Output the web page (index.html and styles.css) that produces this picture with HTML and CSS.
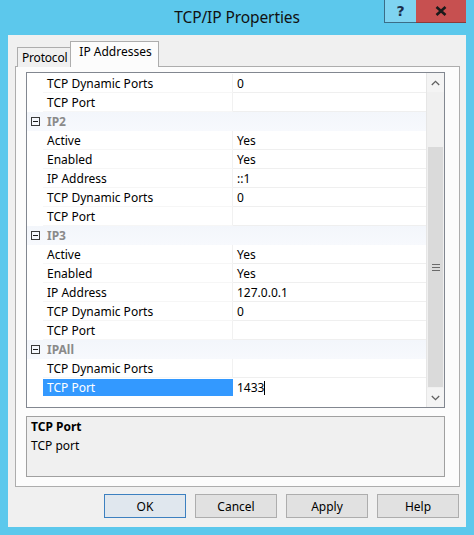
FILE: index.html
```html
<!DOCTYPE html>
<html>
<head>
<meta charset="utf-8">
<link rel="stylesheet" href="styles.css">
</head>
<body>
<div class="window">
  <div class="titlebar">
    <div class="spacer"></div>
    <div class="title">TCP/IP Properties</div>
    <div class="caption-buttons">
      <div class="cap-btn help-btn">?</div>
      <div class="cap-btn close-btn">
        <svg width="12" height="10" viewBox="0 0 12 10"><path d="M1.5 1 L10.5 9 M10.5 1 L1.5 9" stroke="#1a1a1a" stroke-width="2.6" stroke-linecap="butt"/></svg>
      </div>
    </div>
  </div>
  <div class="client">
    <div class="tabs">
      <div class="tab">Protocol</div>
      <div class="tab tab-active">IP Addresses</div>
    </div>
    <div class="panel">
      <div class="grid">
        <div class="rows">
          <div class="row"><div class="gutter"></div><div class="name">TCP Dynamic Ports</div><div class="value">0</div></div>
          <div class="row"><div class="gutter"></div><div class="name">TCP Port</div><div class="value"></div></div>
          <div class="row cat"><div class="gutter"><span class="toggle"></span></div><div class="cat-name">IP2</div></div>
          <div class="row"><div class="gutter"></div><div class="name">Active</div><div class="value">Yes</div></div>
          <div class="row"><div class="gutter"></div><div class="name">Enabled</div><div class="value">Yes</div></div>
          <div class="row"><div class="gutter"></div><div class="name">IP Address</div><div class="value">::1</div></div>
          <div class="row"><div class="gutter"></div><div class="name">TCP Dynamic Ports</div><div class="value">0</div></div>
          <div class="row"><div class="gutter"></div><div class="name">TCP Port</div><div class="value"></div></div>
          <div class="row cat"><div class="gutter"><span class="toggle"></span></div><div class="cat-name">IP3</div></div>
          <div class="row"><div class="gutter"></div><div class="name">Active</div><div class="value">Yes</div></div>
          <div class="row"><div class="gutter"></div><div class="name">Enabled</div><div class="value">Yes</div></div>
          <div class="row"><div class="gutter"></div><div class="name">IP Address</div><div class="value">127.0.0.1</div></div>
          <div class="row"><div class="gutter"></div><div class="name">TCP Dynamic Ports</div><div class="value">0</div></div>
          <div class="row"><div class="gutter"></div><div class="name">TCP Port</div><div class="value"></div></div>
          <div class="row cat"><div class="gutter"><span class="toggle"></span></div><div class="cat-name">IPAll</div></div>
          <div class="row"><div class="gutter"></div><div class="name">TCP Dynamic Ports</div><div class="value"></div></div>
          <div class="row row-selected"><div class="gutter"></div><div class="name">TCP Port</div><div class="value">1433<span class="caret"></span></div></div>
        </div>
        <div class="scrollbar">
          <div class="sb-btn">
            <svg width="9" height="6" viewBox="0 0 9 6"><path d="M0.8 5 L4.5 1.3 L8.2 5" fill="none" stroke="#606060" stroke-width="1.3"/></svg>
          </div>
          <div class="sb-track">
            <div class="sb-thumb">
              <div class="grip"><span></span><span></span><span></span></div>
            </div>
          </div>
          <div class="sb-btn">
            <svg width="9" height="6" viewBox="0 0 9 6"><path d="M0.8 1 L4.5 4.7 L8.2 1" fill="none" stroke="#606060" stroke-width="1.3"/></svg>
          </div>
        </div>
      </div>
      <div class="desc">
        <div class="desc-title">TCP Port</div>
        <div class="desc-text">TCP port</div>
      </div>
    </div>
    <div class="buttons">
      <div class="btn btn-default">OK</div>
      <div class="btn">Cancel</div>
      <div class="btn">Apply</div>
      <div class="btn">Help</div>
    </div>
  </div>
</div>
</body>
</html>
```
FILE: styles.css
```css
html, body {
  margin: 0;
  padding: 0;
}
body {
  background: #5cc8ec;
  font-family: "Noto Sans", "Open Sans", sans-serif;
  font-size: 12px;
  color: #000;
}
.window {
  width: 474px;
  height: 535px;
  background: #5cc8ec;
  display: flex;
  flex-direction: column;
}
.titlebar {
  height: 35px;
  display: grid;
  grid-template-columns: 1fr auto 1fr;
  align-items: start;
}
.title {
  font-size: 15.5px;
  color: #111;
  padding-top: 6px;
  letter-spacing: -0.1px;
}
.caption-buttons {
  display: flex;
  justify-content: flex-end;
  padding-right: 8px;
}
.cap-btn {
  height: 23px;
  display: flex;
  align-items: center;
  justify-content: center;
  box-sizing: border-box;
}
.help-btn {
  width: 32px;
  background: #7fd4f1;
  border: 1px solid #3b6d87;
  border-top: none;
  border-right: none;
  font-weight: bold;
  font-size: 14px;
  color: #1b2d4a;
  font-family: "DejaVu Sans", sans-serif;
}
.close-btn {
  width: 50px;
  background: #c75050;
  border-bottom: 1px solid #8c3a3a;
}
.client {
  flex: 1;
  margin: 0 8px 8px 8px;
  background: #f0f0f0;
  padding: 7px 6px 0 7px;
  display: flex;
  flex-direction: column;
}
.tabs {
  display: flex;
  align-items: flex-end;
  padding-left: 2px;
  height: 25px;
  position: relative;
  z-index: 1;
  margin-bottom: -1px;
}
.tab {
  height: 20px;
  box-sizing: border-box;
  padding: 0 3px 0 4px;
  border: 1px solid #adadad;
  border-bottom: none;
  background: #f0f0f0;
  line-height: 19px;
  letter-spacing: -0.2px;
}
.tab-active {
  height: 26px;
  width: 89px;
  background: #fcfcfc;
  border-left: 1px solid #adadad;
  margin-left: -1px;
  padding-left: 8px;
  line-height: 20px;
  letter-spacing: 0;
}
.panel {
  height: 421px;
  box-sizing: border-box;
  border: 1px solid #adadad;
  background: #fcfcfc;
  padding: 5px 14px 0 10px;
  display: flex;
  flex-direction: column;
}
.grid {
  height: 336px;
  box-sizing: border-box;
  border: 1px solid #828790;
  background: #fff;
  display: flex;
}
.rows {
  flex: 1;
  padding-top: 1px;
}
.row {
  height: 19px;
  display: flex;
  align-items: stretch;
}
.gutter {
  width: 16px;
  flex: none;
  display: flex;
  align-items: center;
  justify-content: center;
  background: #fff;
}
.name {
  width: 190px;
  flex: none;
  padding-left: 4px;
  line-height: 19px;
  border-right: 1px solid #f1f1f1;
  border-bottom: 1px solid #f6f6f6;
  box-sizing: border-box;
  white-space: nowrap;
}
.value {
  flex: 1;
  padding-left: 4px;
  line-height: 19px;
  border-bottom: 1px solid #efefef;
  box-sizing: border-box;
  display: flex;
  align-items: center;
}
.cat {
  background: linear-gradient(#f3f6fb, #f7f9fd);
}
.cat .gutter {
  background: transparent;
}
.cat-name {
  padding-left: 4px;
  line-height: 19px;
  font-weight: 700;
  color: #8a8a8a;
}
.toggle {
  width: 9px;
  height: 9px;
  box-sizing: border-box;
  border: 1px solid #3a3a3a;
  position: relative;
  display: block;
  margin-left: 1px;
}
.toggle::after {
  content: "";
  position: absolute;
  left: 1px;
  right: 1px;
  top: 3px;
  height: 1px;
  background: #1a1a1a;
}
.row-selected .name {
  background: #3399ff;
  color: #fff;
  border-right: none;
  height: 17px;
  line-height: 17px;
  margin-top: 1px;
  border-bottom: none;
}
.row-selected .value {
  border-bottom: none;
}
.caret {
  display: inline-block;
  width: 1px;
  height: 14px;
  background: #000;
}
.scrollbar {
  width: 17px;
  flex: none;
  display: flex;
  flex-direction: column;
  background: #f0f0f0;
  border-left: 1px solid #e6e6e6;
}
.sb-btn {
  height: 19px;
  display: flex;
  align-items: center;
  justify-content: center;
  background: #f4f4f4;
}
.sb-track {
  flex: 1;
  display: flex;
  flex-direction: column;
  padding-top: 55px;
  padding-bottom: 1px;
}
.sb-thumb {
  flex: 1;
  background: #dadada;
  margin: 0 1px;
  display: flex;
  align-items: center;
  justify-content: center;
}
.grip {
  display: flex;
  flex-direction: column;
  gap: 2px;
}
.grip span {
  width: 8px;
  height: 1px;
  background: #6a6a6a;
  display: block;
}
.desc {
  margin-top: 8px;
  height: 61px;
  box-sizing: border-box;
  border: 1px solid #a0a0a0;
  background: #f0f0f0;
  padding: 1px 0 0 4px;
}
.desc-title {
  font-weight: 700;
  line-height: 18px;
}
.desc-text {
  line-height: 20px;
}
.buttons {
  display: flex;
  justify-content: flex-end;
  gap: 9px;
  padding-top: 7px;
  padding-right: 1px;
}
.btn {
  width: 82px;
  height: 24px;
  box-sizing: border-box;
  border: 1px solid #adadad;
  background: #e1e1e1;
  display: flex;
  align-items: center;
  justify-content: center;
}
.btn-default {
  border-color: #3c80c0;
  background: #e0e7ee;
}
```
